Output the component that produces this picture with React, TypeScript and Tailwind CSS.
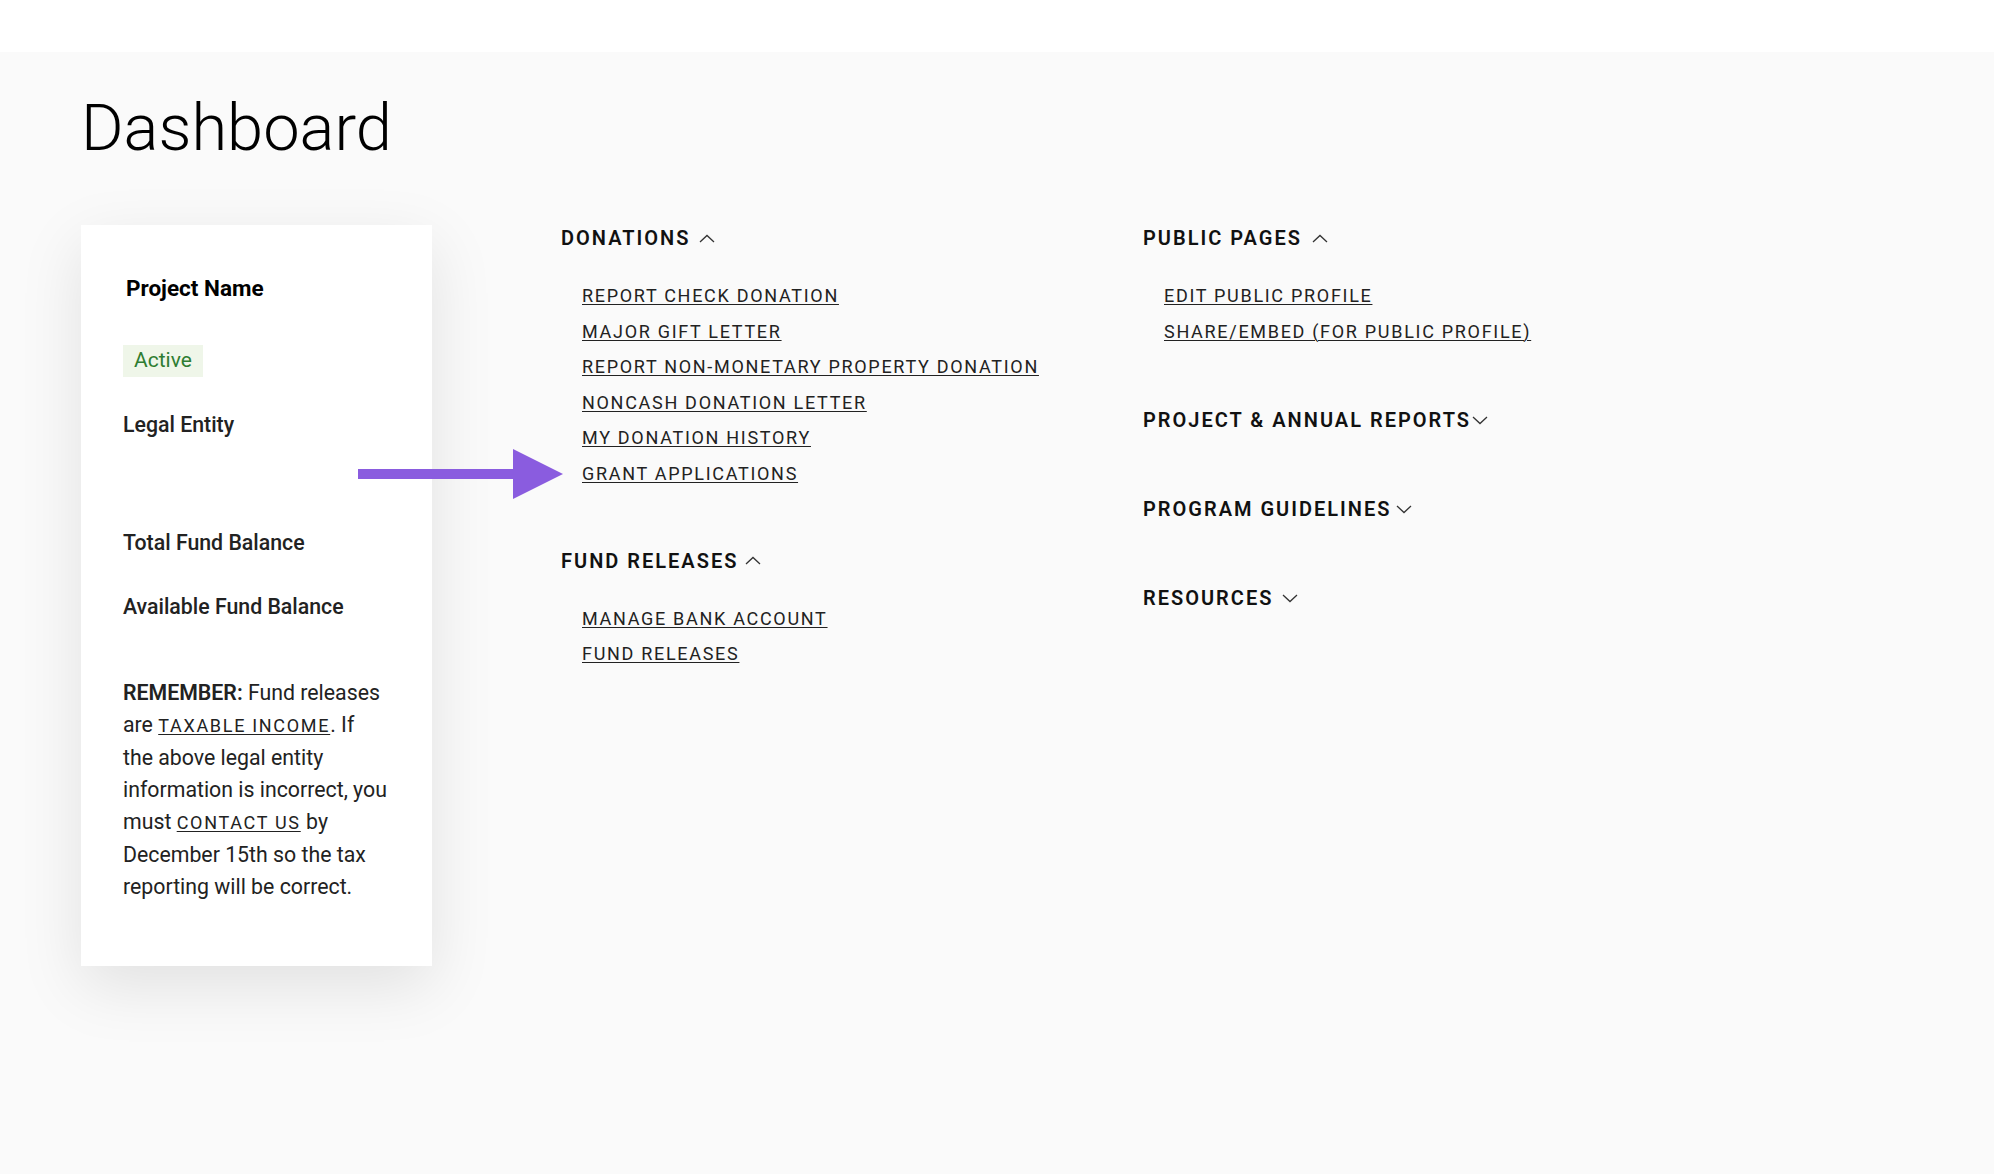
import React from "react";

function ChevronUp({ className = "" }: { className?: string }) {
  return (
    <svg width="16" height="9" viewBox="0 0 16 9" className={className} fill="none">
      <polyline points="1,8 8,1.5 15,8" stroke="#333" strokeWidth="1.3" />
    </svg>
  );
}

function ChevronDown({ className = "" }: { className?: string }) {
  return (
    <svg width="16" height="9" viewBox="0 0 16 9" className={className} fill="none">
      <polyline points="1,1 8,7.5 15,1" stroke="#333" strokeWidth="1.3" />
    </svg>
  );
}

function Heading({ label, open, gap }: { label: string; open: boolean; gap: string }) {
  return (
    <div className="flex items-center h-[28px]">
      <span className="text-[20px] leading-[28px] font-semibold tracking-[0.1em] text-[#111]">{label}</span>
      {open ? <ChevronUp className={gap} /> : <ChevronDown className={gap} />}
    </div>
  );
}

function LinkList({ items }: { items: string[] }) {
  return (
    <ul className="pl-[21px] mt-[26px]">
      {items.map((t) => (
        <li key={t} className="text-[18px] leading-[35.6px]">
          <a href="#" className="underline underline-offset-[2px] decoration-1 tracking-[1.7px] text-[#222]">
            {t}
          </a>
        </li>
      ))}
    </ul>
  );
}

export default function App() {
  const inlineLink =
    "underline underline-offset-[2px] decoration-1 text-[18px] tracking-[1.7px]";
  return (
    <div className="min-h-[1174px] bg-[#fafafa] font-['Roboto',sans-serif] text-[#222]">
      <div className="h-[52px] bg-white" />
      <div className="pl-[81px] pt-[39px]">
        <h1 className="text-[65px] font-light leading-[75px] text-black">Dashboard</h1>
        <div className="relative flex items-start mt-[59px]">
          {/* Card */}
          <div className="w-[351px] h-[741px] bg-white shadow-[0_20px_60px_rgba(0,0,0,0.10)] pl-[42px] pr-[20px] pt-[48px]">
            <div className="ml-[3px] text-[22.5px] leading-[30px] font-bold text-black">Project Name</div>
            <div className="mt-[42px] inline-flex items-center h-[32px] px-[11px] bg-[#eff6e9] text-[#2e7d32] text-[21px]">
              Active
            </div>
            <div className="mt-[34px] text-[21.3px] leading-[28px] font-medium">Legal Entity</div>
            <div className="mt-[90px] text-[21.3px] leading-[28px] font-medium">Total Fund Balance</div>
            <div className="mt-[36px] text-[21.3px] leading-[28px] font-medium">Available Fund Balance</div>
            <p className="mt-[56px] text-[21.3px] leading-[32px] whitespace-nowrap">
              <span className="font-semibold">REMEMBER:</span> Fund releases
              <br />
              are{" "}
              <a href="#" className={inlineLink}>
                TAXABLE INCOME
              </a>
              . If
              <br />
              the above legal entity
              <br />
              information is incorrect, you
              <br />
              must{" "}
              <a href="#" className={inlineLink}>
                CONTACT US
              </a>{" "}
              by
              <br />
              December 15th so the tax
              <br />
              reporting will be correct.
            </p>
          </div>

          {/* Arrow */}
          <svg
            className="absolute left-[277px] top-[224px] z-10"
            width="205"
            height="50"
            viewBox="0 0 205 50"
          >
            <rect x="0" y="20" width="158" height="10" fill="#8a5cdf" />
            <polygon points="155,0 205,25 155,50" fill="#8a5cdf" />
          </svg>

          {/* Donations column */}
          <div className="ml-[129px] w-[582px] -mt-[1px]">
            <Heading label="DONATIONS" open={true} gap="ml-[9px]" />
            <LinkList
              items={[
                "REPORT CHECK DONATION",
                "MAJOR GIFT LETTER",
                "REPORT NON-MONETARY PROPERTY DONATION",
                "NONCASH DONATION LETTER",
                "MY DONATION HISTORY",
                "GRANT APPLICATIONS",
              ]}
            />
            <div className="mt-[55px]">
              <Heading label="FUND RELEASES" open={true} gap="ml-[7px]" />
            </div>
            <LinkList items={["MANAGE BANK ACCOUNT", "FUND RELEASES"]} />
          </div>

          {/* Right column */}
          <div className="-mt-[1px]">
            <Heading label="PUBLIC PAGES" open={true} gap="ml-[10px]" />
            <LinkList items={["EDIT PUBLIC PROFILE", "SHARE/EMBED (FOR PUBLIC PROFILE)"]} />
            <div className="mt-[57px]">
              <Heading label="PROJECT & ANNUAL REPORTS" open={false} gap="ml-[1px]" />
            </div>
            <div className="mt-[61px]">
              <Heading label="PROGRAM GUIDELINES" open={false} gap="ml-[4px]" />
            </div>
            <div className="mt-[61px]">
              <Heading label="RESOURCES" open={false} gap="ml-[9px]" />
            </div>
          </div>
        </div>
      </div>
    </div>
  );
}
